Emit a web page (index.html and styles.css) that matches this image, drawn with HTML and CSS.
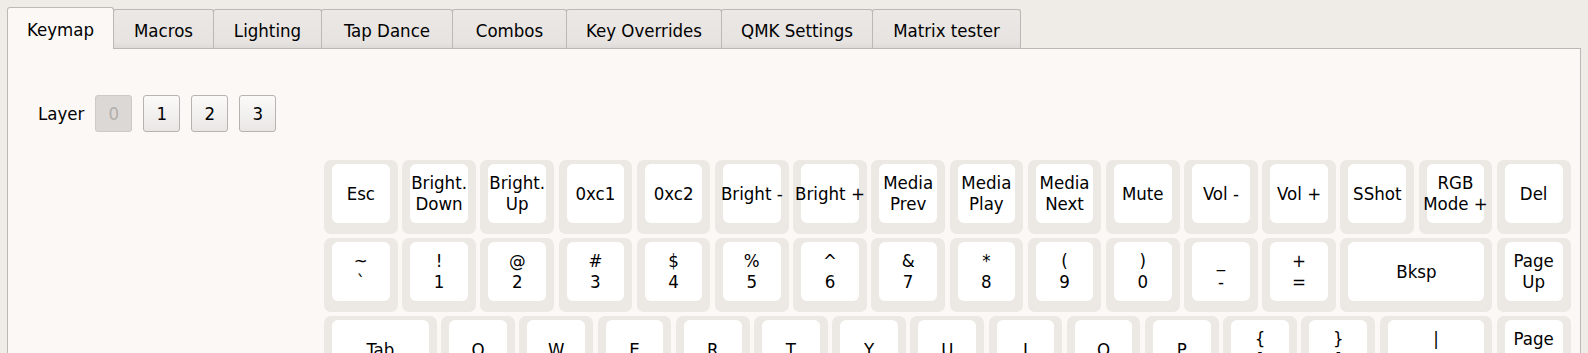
FILE: index.html
```html
<!DOCTYPE html>
<html>
<head>
<meta charset="utf-8">
<link rel="stylesheet" href="styles.css">
</head>
<body>
<div class="tabbar">
  <div class="tab active t-keymap">Keymap</div>
  <div class="tab t-macros">Macros</div>
  <div class="tab t-lighting">Lighting</div>
  <div class="tab t-tapdance">Tap Dance</div>
  <div class="tab t-combos">Combos</div>
  <div class="tab t-overrides">Key Overrides</div>
  <div class="tab t-qmk">QMK Settings</div>
  <div class="tab t-matrix">Matrix tester</div>
</div>
<div class="panel">
  <div class="layers">
    <span class="layer-label">Layer</span>
    <button class="lbtn" disabled>0</button>
    <button class="lbtn">1</button>
    <button class="lbtn">2</button>
    <button class="lbtn">3</button>
  </div>
  <div class="keyboard">
    <div class="row">
      <div class="key"><div class="cap">Esc</div></div>
      <div class="key"><div class="cap">Bright.<br>Down</div></div>
      <div class="key"><div class="cap">Bright.<br>Up</div></div>
      <div class="key"><div class="cap">0xc1</div></div>
      <div class="key"><div class="cap">0xc2</div></div>
      <div class="key"><div class="cap">Bright -</div></div>
      <div class="key"><div class="cap">Bright +</div></div>
      <div class="key"><div class="cap">Media<br>Prev</div></div>
      <div class="key"><div class="cap">Media<br>Play</div></div>
      <div class="key"><div class="cap">Media<br>Next</div></div>
      <div class="key"><div class="cap">Mute</div></div>
      <div class="key"><div class="cap">Vol -</div></div>
      <div class="key"><div class="cap">Vol +</div></div>
      <div class="key"><div class="cap">SShot</div></div>
      <div class="key"><div class="cap">RGB<br>Mode +</div></div>
      <div class="key"><div class="cap">Del</div></div>
    </div>
    <div class="row">
      <div class="key"><div class="cap">~<br>`</div></div>
      <div class="key"><div class="cap">!<br>1</div></div>
      <div class="key"><div class="cap">@<br>2</div></div>
      <div class="key"><div class="cap">#<br>3</div></div>
      <div class="key"><div class="cap">$<br>4</div></div>
      <div class="key"><div class="cap">%<br>5</div></div>
      <div class="key"><div class="cap">^<br>6</div></div>
      <div class="key"><div class="cap">&amp;<br>7</div></div>
      <div class="key"><div class="cap">*<br>8</div></div>
      <div class="key"><div class="cap">(<br>9</div></div>
      <div class="key"><div class="cap">)<br>0</div></div>
      <div class="key"><div class="cap">_<br>-</div></div>
      <div class="key"><div class="cap">+<br>=</div></div>
      <div class="key w2"><div class="cap">Bksp</div></div>
      <div class="key"><div class="cap">Page<br>Up</div></div>
    </div>
    <div class="row">
      <div class="key w15"><div class="cap">Tab</div></div>
      <div class="key"><div class="cap">Q</div></div>
      <div class="key"><div class="cap">W</div></div>
      <div class="key"><div class="cap">E</div></div>
      <div class="key"><div class="cap">R</div></div>
      <div class="key"><div class="cap">T</div></div>
      <div class="key"><div class="cap">Y</div></div>
      <div class="key"><div class="cap">U</div></div>
      <div class="key"><div class="cap">I</div></div>
      <div class="key"><div class="cap">O</div></div>
      <div class="key"><div class="cap">P</div></div>
      <div class="key"><div class="cap">{<br>[</div></div>
      <div class="key"><div class="cap">}<br>]</div></div>
      <div class="key w15"><div class="cap">|<br>\</div></div>
      <div class="key"><div class="cap">Page<br>Down</div></div>
    </div>
  </div>
</div>
</body>
</html>
```

FILE: styles.css
```css
html, body {
  margin: 0;
  padding: 0;
  height: 353px;
  overflow: hidden;
}
body {
  background: #efebe7;
  font-family: "DejaVu Sans Condensed", "DejaVu Sans", sans-serif;
  font-stretch: condensed;
  font-size: 18.5px;
  color: #000;
}
.tabbar {
  display: flex;
  align-items: flex-end;
  height: 48px;
  padding-left: 7px;
}
.tab {
  box-sizing: border-box;
  height: 39px;
  padding: 3px 0 0 0;
  display: flex;
  align-items: center;
  justify-content: center;
  flex: none;
  border: 1px solid #bcb8b4;
  border-bottom: none;
  border-radius: 3px 3px 0 0;
  background: linear-gradient(#ebe8e5, #e6e3e0 85%, #dedad7);
  margin-left: -1px;
  white-space: nowrap;
}
.tab:first-child {
  margin-left: 0;
}
.tab.active {
  height: 42px;
  margin-bottom: -1px;
  background: #fbf8f5;
  position: relative;
  z-index: 1;
  padding-top: 1px;
}
.t-keymap { width: 107px; }
.t-macros { width: 101px; }
.t-lighting { width: 109px; }
.t-tapdance { width: 132px; }
.t-combos { width: 115px; }
.t-overrides { width: 156px; }
.t-qmk { width: 152px; }
.t-matrix { width: 149px; }
.panel {
  box-sizing: border-box;
  height: 420px;
  margin: 0 7px 0 7px;
  border: 1px solid #bcb8b4;
  background: #fbf8f5;
}
.layers {
  display: flex;
  align-items: center;
  gap: 11px;
  margin: 45px 0 0 30px;
  height: 38px;
}
.lbtn {
  box-sizing: border-box;
  width: 37px;
  height: 37px;
  padding: 0;
  border: 1px solid #b7b3af;
  border-radius: 3px;
  background: linear-gradient(#fbfaf9, #f1efed 60%, #e9e6e3);
  font: inherit;
  color: #000;
}
.lbtn:disabled {
  background: #dcd8d5;
  border-color: #cdc9c6;
  color: #b3afab;
}
.keyboard {
  margin: 28px 0 0 316px;
  display: flex;
  flex-direction: column;
  gap: 4.5px;
}
.row {
  display: flex;
  gap: 4.5px;
}
.key {
  box-sizing: border-box;
  width: 73.7px;
  height: 73.5px;
  flex: none;
  background: #ece8e3;
  border-radius: 7px;
  padding: 4px 8px 11px 8px;
}
.key.w15 {
  width: 112.8px;
}
.key.w2 {
  width: 151.9px;
}
.cap {
  height: 100%;
  background: #fff;
  border-radius: 6px;
  display: flex;
  align-items: center;
  justify-content: center;
  text-align: center;
  line-height: 21px;
  white-space: nowrap;
}
```
